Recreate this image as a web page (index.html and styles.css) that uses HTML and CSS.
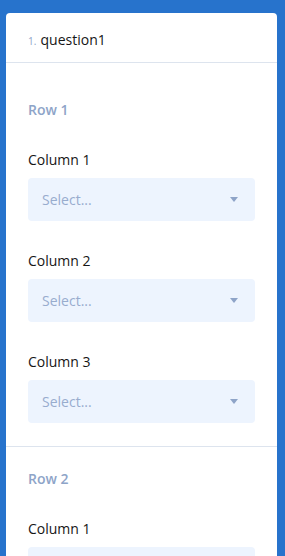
FILE: index.html
```html
<!DOCTYPE html>
<html lang="en">
<head>
    <meta charset="UTF-8">
    <meta name="viewport" content="width=device-width, initial-scale=1.0">
    <title>question1</title>
    <link rel="stylesheet" href="styles.css">
</head>
<body>
    <div class="card">
        <div class="question-header">
            <span class="question-num">1.</span>
            <span class="question-title">question1</span>
        </div>

        <div class="row-panel first">
            <div class="row-title">Row 1</div>
            <div class="field">
                <div class="field-label">Column 1</div>
                <div class="select"><span>Select...</span><span class="arrow"></span></div>
            </div>
            <div class="field">
                <div class="field-label">Column 2</div>
                <div class="select"><span>Select...</span><span class="arrow"></span></div>
            </div>
            <div class="field">
                <div class="field-label">Column 3</div>
                <div class="select"><span>Select...</span><span class="arrow"></span></div>
            </div>
        </div>

        <div class="row-panel">
            <div class="row-title">Row 2</div>
            <div class="field">
                <div class="field-label">Column 1</div>
                <div class="select"></div>
            </div>
        </div>
    </div>
</body>
</html>
```

FILE: styles.css
```css
body {
    margin: 0;
    background: #2773cc;
    font-family: "Open Sans", sans-serif;
    height: 556px;
    overflow: hidden;
}

.card {
    margin: 13px 8px 0 6px;
    background: white;
    border-radius: 4px;
}

.question-header {
    height: 50px;
    box-sizing: border-box;
    padding: 16px 22px 0;
    line-height: 20px;
    border-bottom: 1px solid #dde4ee;
}

.question-num {
    font-size: 10px;
    color: #8ea4c8;
}

.question-title {
    font-size: 14px;
    color: #161616;
}

.row-panel {
    padding: 22px 22px 23px;
    border-bottom: 1px solid #dde4ee;
}

.row-panel.first {
    padding-top: 37px;
}

.row-title {
    font-size: 14px;
    font-weight: 600;
    line-height: 20px;
    color: #8ea4c8;
}

.field {
    margin-top: 30px;
}

.field-label {
    font-size: 14px;
    line-height: 20px;
    color: #161616;
    margin-bottom: 8px;
}

.select {
    height: 43px;
    background: #edf4fe;
    border-radius: 4px;
    display: flex;
    align-items: center;
    justify-content: space-between;
    padding: 0 17px 0 14px;
    font-size: 14px;
    color: #98acce;
}

.arrow {
    width: 0;
    height: 0;
    border-left: 4.5px solid transparent;
    border-right: 4.5px solid transparent;
    border-top: 5px solid #8ea4c8;
}
```
